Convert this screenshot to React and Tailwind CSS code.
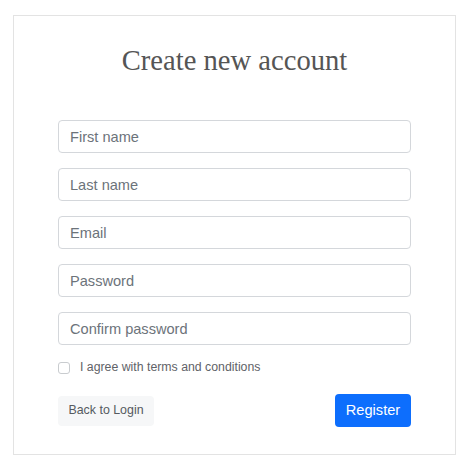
import React from 'react'

const fields = ['First name', 'Last name', 'Email', 'Password', 'Confirm password']

const App = () => {
  return (
    <div className="min-h-screen bg-white pt-[15px] pl-[13px]" style={{ fontFamily: '"Liberation Sans", Arial, sans-serif' }}>
      <div className="w-[443px] border border-[#e3e3e3] px-[44px] pt-[29px] pb-[27px]">
        <h1 className="h-[32px] text-center text-[28.6px] leading-[32px] text-[#555555] mb-[43px]" style={{ fontFamily: '"Liberation Serif", "Times New Roman", serif' }}>
          Create new account
        </h1>
        <div className="flex flex-col gap-[15px]">
          {fields.map((f) => (
            <input
              key={f}
              type={f.includes('assword') ? 'password' : 'text'}
              placeholder={f}
              className="h-[33px] w-full rounded-[4px] border border-[#d4d7db] bg-white px-[11px] text-[14.6px] text-[#333] placeholder:text-[#6c737a] outline-none"
            />
          ))}
        </div>
        <label className="mt-[12px] flex h-[21px] items-center gap-[10px]">
          <span className="h-[12px] w-[12px] rounded-[3px] border border-[#c9cccf] bg-white"></span>
          <span className="text-[12.3px] text-[#5f6368]">I agree with terms and conditions</span>
        </label>
        <div className="mt-[16px] flex h-[33px] items-center justify-between">
          <button className="h-[30px] w-[96px] rounded-[4px] bg-[#f6f7f8] text-[12.4px] text-[#555a60]">
            Back to Login
          </button>
          <button className="h-[33px] w-[76px] rounded-[4px] bg-[#0d6efd] text-[14.6px] text-white">
            Register
          </button>
        </div>
      </div>
    </div>
  )
}

export default App
